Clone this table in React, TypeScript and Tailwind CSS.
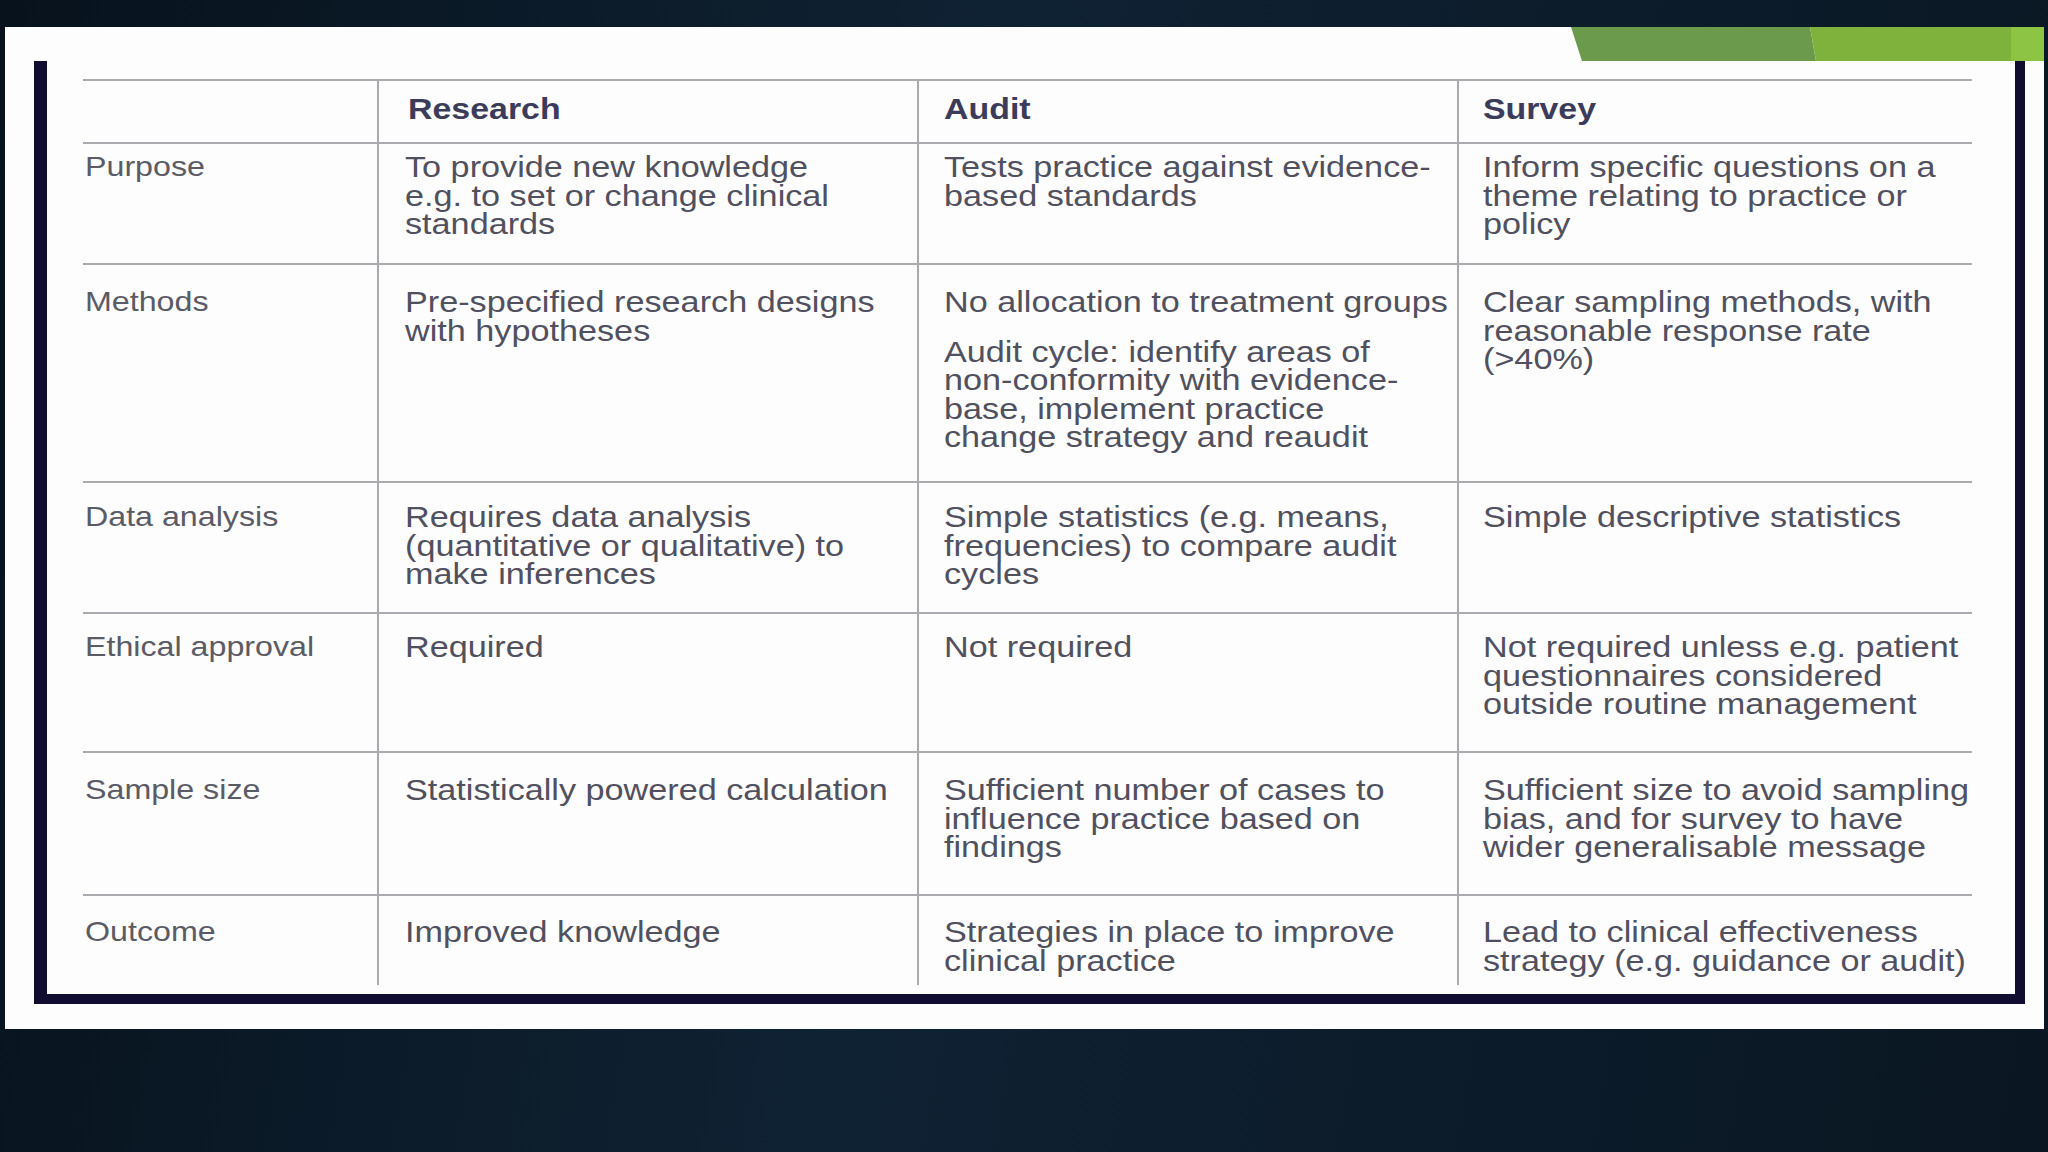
const rows = [
  {
    label: 'Purpose',
    h: 'h-[121px]',
    pt: 'pt-[9px]',
    cells: [
      ['To provide new knowledge', 'e.g. to set or change clinical', 'standards'],
      ['Tests practice against evidence-', 'based standards'],
      ['Inform specific questions on a', 'theme relating to practice or', 'policy'],
    ],
  },
  {
    label: 'Methods',
    h: 'h-[218px]',
    pt: 'pt-[23px]',
    cells: [
      ['Pre-specified research designs', 'with hypotheses'],
      null,
      ['Clear sampling methods, with', 'reasonable response rate', '(>40%)'],
    ],
  },
  {
    label: 'Data analysis',
    h: 'h-[131px]',
    pt: 'pt-[20px]',
    cells: [
      ['Requires data analysis', '(quantitative or qualitative) to', 'make inferences'],
      ['Simple statistics (e.g. means,', 'frequencies) to compare audit', 'cycles'],
      ['Simple descriptive statistics'],
    ],
  },
  {
    label: 'Ethical approval',
    h: 'h-[139px]',
    pt: 'pt-[19px]',
    cells: [
      ['Required'],
      ['Not required'],
      ['Not required unless e.g. patient', 'questionnaires considered', 'outside routine management'],
    ],
  },
  {
    label: 'Sample size',
    h: 'h-[143px]',
    pt: 'pt-[23px]',
    cells: [
      ['Statistically powered calculation'],
      ['Sufficient number of cases to', 'influence practice based on', 'findings'],
      ['Sufficient size to avoid sampling', 'bias, and for survey to have', 'wider generalisable message'],
    ],
  },
  {
    label: 'Outcome',
    h: 'h-[91px]',
    pt: 'pt-[22px]',
    cells: [
      ['Improved knowledge'],
      ['Strategies in place to improve', 'clinical practice'],
      ['Lead to clinical effectiveness', 'strategy (e.g. guidance or audit)'],
    ],
  },
];

const colPad = ['pl-[26px]', 'pl-[25px]', 'pl-[24px]'];

// the slide image is stretched sideways, so every text block is scaled on x
function Lines({ lines }: { lines: string[] }) {
  return (
    <div className="origin-left scale-x-[1.14] whitespace-nowrap text-[30px] leading-[28.5px] text-[#50505f]">
      {lines.map(l => (
        <div key={l}>{l}</div>
      ))}
    </div>
  );
}

function GreenBar() {
  return (
    <svg width="473" height="34" viewBox="0 0 473 34" className="block">
      <polygon points="0,0 239,0 245,34 11,34" fill="#6c9a4d" />
      <polygon points="239,0 440,0 440,34 245,34" fill="#7fb23c" />
      <polygon points="440,0 473,0 473,34 440,34" fill="#8ec443" />
    </svg>
  );
}

export default function App() {
  return (
    <div className="w-[2048px] h-[1152px] overflow-hidden bg-[linear-gradient(100deg,#07121c_0%,#0f2233_45%,#0c1c2b_70%,#0a1722_100%)] pt-[27px] pl-[5px] font-['Liberation_Sans',Arial,sans-serif]">
      <div className="w-[2039px] h-[1002px] bg-[#fdfdfd] flex flex-col">
        <div className="h-[34px] flex justify-end">
          <GreenBar />
        </div>
        <div className="ml-[29px] w-[1991px] h-[943px] border-l-[13px] border-r-[10px] border-b-[10px] border-[#110d30] pl-[36px] pt-[18px]">
          <div className="grid grid-cols-[294px_540px_540px_515px] w-[1889px]">
            <div className="h-[63px] border-t-2 border-[#ababaf]" />
            {['Research', 'Audit', 'Survey'].map((t, i) => (
              <div key={t} className={`h-[63px] border-t-2 border-l-2 border-[#ababaf] pt-[14px] ${i === 0 ? 'pl-[29px]' : colPad[i]}`}>
                <div className="origin-left scale-x-[1.13] whitespace-nowrap text-[30px] leading-[28.5px] font-bold text-[#3c3c5a]">
                  {t}
                </div>
              </div>
            ))}
            {rows.map((r, ri) => (
              <>
                <div key={r.label} className={`${r.h} ${r.pt} border-t-2 border-[#ababaf] pl-[2px]`}>
                  <div className="origin-left scale-x-[1.15] whitespace-nowrap text-[28px] leading-[28.5px] text-[#5b5b66]">
                    {r.label}
                  </div>
                </div>
                {r.cells.map((c, ci) => (
                  <div key={`${ri}-${ci}`} className={`${r.h} ${r.pt} ${colPad[ci]} border-t-2 border-l-2 border-[#ababaf]`}>
                    {c ? (
                      <Lines lines={c} />
                    ) : (
                      <>
                        <Lines lines={['No allocation to treatment groups']} />
                        <div className="mt-[21px]">
                          <Lines
                            lines={[
                              'Audit cycle: identify areas of',
                              'non-conformity with evidence-',
                              'base, implement practice',
                              'change strategy and reaudit',
                            ]}
                          />
                        </div>
                      </>
                    )}
                  </div>
                ))}
              </>
            ))}
          </div>
        </div>
      </div>
    </div>
  );
}
